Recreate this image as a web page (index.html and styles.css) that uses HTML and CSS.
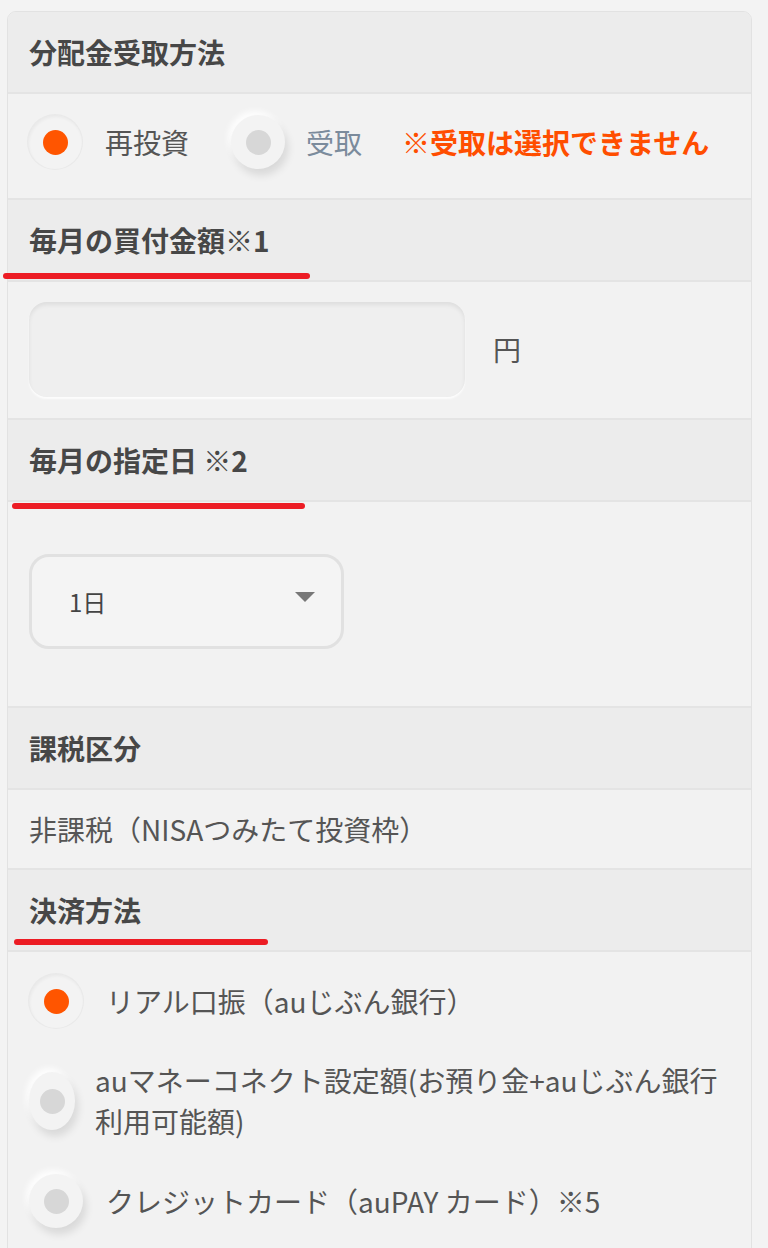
FILE: index.html
```html
<!DOCTYPE html>
<html lang="ja">
<head>
    <meta charset="UTF-8">
    <meta name="viewport" content="width=device-width, initial-scale=1.0">
    <title>積立設定</title>
    <link rel="stylesheet" href="styles.css">
</head>
<body>
    <div class="card">
        <!-- 分配金 -->
        <div class="sec-head">分配金受取方法</div>
        <div class="sec-body inline-radios">
            <span class="radio checked"><span class="dot"></span></span>
            <span class="label">再投資</span>
            <span class="radio raised"><span class="dot"></span></span>
            <span class="label muted">受取</span>
            <span class="warn">※受取は選択できません</span>
        </div>

        <!-- 買付金額 -->
        <div class="sec-head">毎月の買付金額※1<span class="mark mark-1"></span></div>
        <div class="sec-body amount-row">
            <div class="amount-input"></div>
            <span class="unit">円</span>
        </div>

        <!-- 指定日 -->
        <div class="sec-head">毎月の指定日 ※2<span class="mark mark-2"></span></div>
        <div class="sec-body day-row">
            <div class="day-select">
                <span>1日</span>
                <span class="caret"></span>
            </div>
        </div>

        <!-- 課税区分 -->
        <div class="sec-head">課税区分</div>
        <div class="sec-body tax-row">非課税（NISAつみたて投資枠）</div>

        <!-- 決済方法 -->
        <div class="sec-head">決済方法<span class="mark mark-3"></span></div>
        <div class="sec-body pay-list">
            <div class="pay-item">
                <span class="radio checked"><span class="dot"></span></span>
                <span class="label">リアル口振（auじぶん銀行）</span>
            </div>
            <div class="pay-item squeezed">
                <span class="radio raised"><span class="dot"></span></span>
                <span class="label">auマネーコネクト設定額(お預り金+auじぶん銀行利用可能額)</span>
            </div>
            <div class="pay-item">
                <span class="radio raised"><span class="dot"></span></span>
                <span class="label">クレジットカード（auPAY カード）※5</span>
            </div>
        </div>
    </div>
</body>
</html>
```

FILE: styles.css
```css
body {
    margin: 0;
    background-color: #f3f3f3;
    font-family: "Noto Sans CJK JP", "Noto Sans", sans-serif;
    color: #555;
    font-size: 28px;
}

.card {
    margin: 11px 0 0 7px;
    width: 743px;
    height: 1260px;
    border: 1px solid #e2e2e2;
    border-radius: 9px 9px 0 0;
    background-color: #f2f2f2;
}

.sec-head {
    position: relative;
    height: 80px;
    display: flex;
    align-items: center;
    padding-left: 21px;
    background-color: #ececec;
    border-bottom: 2px solid #e4e4e4;
    font-weight: bold;
    color: #474747;
}

.card > .sec-head:first-child {
    border-radius: 8px 8px 0 0;
}

.sec-body {
    border-bottom: 2px solid #e4e4e4;
    padding-left: 21px;
}

/* hand-drawn red underline marks */
.mark {
    position: absolute;
    height: 6px;
    background-color: #ec1c24;
    border-radius: 3px;
    z-index: 2;
}

.mark-1 {
    left: -5px;
    top: 73px;
    width: 307px;
}

.mark-2 {
    left: 4px;
    top: 83px;
    width: 293px;
}

.mark-3 {
    left: 6px;
    top: 69px;
    width: 254px;
}

/* radios */
.radio {
    flex-shrink: 0;
    width: 54px;
    height: 54px;
    border-radius: 50%;
    background-color: #f3f3f3;
    display: flex;
    align-items: center;
    justify-content: center;
}

.radio .dot {
    width: 25px;
    height: 25px;
    border-radius: 50%;
    background-color: #d7d7d7;
}

.radio.checked {
    box-shadow: 0 0 0 1px #e9e9e9, inset 1px 2px 3px rgba(0, 0, 0, 0.04);
}

.radio.checked .dot {
    background-color: #ff5500;
}

.radio.raised {
    box-shadow: 3px 6px 9px rgba(0, 0, 0, 0.11), -3px -4px 6px rgba(255, 255, 255, 0.9);
}

.inline-radios {
    height: 96px;
    padding-bottom: 8px;
    display: flex;
    align-items: center;
    padding-left: 20px;
}

.inline-radios .label {
    margin-left: 23px;
    margin-right: 42px;
}

.inline-radios .label.muted {
    margin-left: 21px;
    margin-right: 40px;
    color: #7b8b9c;
}

.warn {
    color: #ff4e00;
    font-weight: bold;
}

/* amount */
.amount-row {
    height: 134px;
    padding-bottom: 2px;
    display: flex;
    align-items: center;
}

.amount-input {
    width: 436px;
    height: 95px;
    border-radius: 18px;
    background-color: #efefef;
    box-shadow: inset 0 3px 4px rgba(0, 0, 0, 0.07), 0 2px 2px rgba(255, 255, 255, 0.8);
}

.unit {
    margin-left: 28px;
}

/* day select */
.day-row {
    height: 198px;
    padding-bottom: 6px;
    display: flex;
    align-items: center;
}

.day-select {
    box-sizing: border-box;
    width: 315px;
    height: 95px;
    border: 3px solid #e1e1e1;
    border-radius: 20px;
    background-color: #f4f4f4;
    display: flex;
    align-items: center;
    justify-content: space-between;
    padding: 0 26px 0 37px;
    font-size: 24px;
    color: #444;
}

.caret {
    width: 0;
    height: 0;
    border-left: 10px solid transparent;
    border-right: 10px solid transparent;
    border-top: 10px solid #777;
    margin-bottom: 8px;
}

/* tax */
.tax-row {
    height: 78px;
    display: flex;
    align-items: center;
}

/* payment */
.pay-list {
    border-bottom: none;
    padding: 22px 20px 0 21px;
}

.pay-item {
    display: flex;
    align-items: center;
    min-height: 54px;
    margin-bottom: 32px;
}

.pay-item .label {
    margin-left: 23px;
}

.pay-item.squeezed .radio {
    width: 46px;
    height: 58px;
}

.pay-item.squeezed .label {
    margin-left: 20px;
    line-height: 41px;
}
```
